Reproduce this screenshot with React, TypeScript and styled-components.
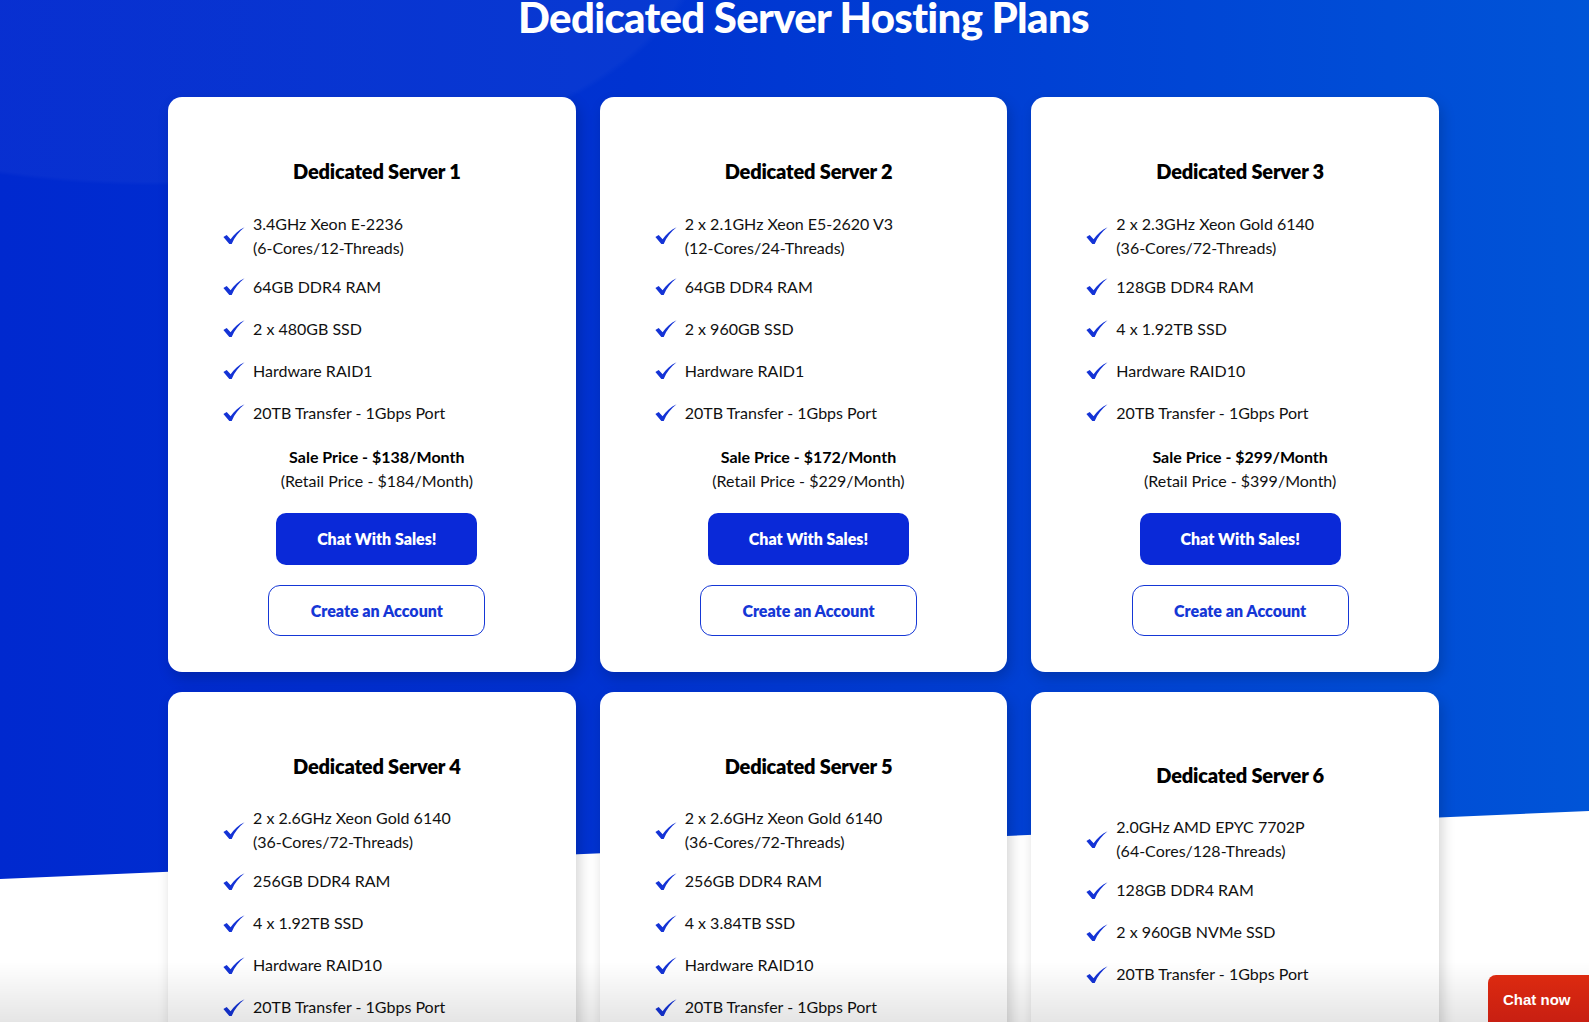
import styled, { createGlobalStyle } from 'styled-components';

interface Plan {
  name: string;
  features: string[][];
  sale?: string;
  retail?: string;
  shift?: number;
}

const plans: Plan[] = [
  {
    name: 'Dedicated Server 1',
    features: [
      ['3.4GHz Xeon E-2236', '(6-Cores/12-Threads)'],
      ['64GB DDR4 RAM'],
      ['2 x 480GB SSD'],
      ['Hardware RAID1'],
      ['20TB Transfer - 1Gbps Port'],
    ],
    sale: '$138/Month',
    retail: '$184/Month',
  },
  {
    name: 'Dedicated Server 2',
    features: [
      ['2 x 2.1GHz Xeon E5-2620 V3', '(12-Cores/24-Threads)'],
      ['64GB DDR4 RAM'],
      ['2 x 960GB SSD'],
      ['Hardware RAID1'],
      ['20TB Transfer - 1Gbps Port'],
    ],
    sale: '$172/Month',
    retail: '$229/Month',
  },
  {
    name: 'Dedicated Server 3',
    features: [
      ['2 x 2.3GHz Xeon Gold 6140', '(36-Cores/72-Threads)'],
      ['128GB DDR4 RAM'],
      ['4 x 1.92TB SSD'],
      ['Hardware RAID10'],
      ['20TB Transfer - 1Gbps Port'],
    ],
    sale: '$299/Month',
    retail: '$399/Month',
  },
  {
    name: 'Dedicated Server 4',
    features: [
      ['2 x 2.6GHz Xeon Gold 6140', '(36-Cores/72-Threads)'],
      ['256GB DDR4 RAM'],
      ['4 x 1.92TB SSD'],
      ['Hardware RAID10'],
      ['20TB Transfer - 1Gbps Port'],
    ],
  },
  {
    name: 'Dedicated Server 5',
    features: [
      ['2 x 2.6GHz Xeon Gold 6140', '(36-Cores/72-Threads)'],
      ['256GB DDR4 RAM'],
      ['4 x 3.84TB SSD'],
      ['Hardware RAID10'],
      ['20TB Transfer - 1Gbps Port'],
    ],
  },
  {
    name: 'Dedicated Server 6',
    features: [
      ['2.0GHz AMD EPYC 7702P', '(64-Cores/128-Threads)'],
      ['128GB DDR4 RAM'],
      ['2 x 960GB NVMe SSD'],
      ['20TB Transfer - 1Gbps Port'],
    ],
    shift: 9,
  },
];

const Check = () => (
  <CheckIcon viewBox="0 0 22 17" aria-hidden="true">
    <path d="M0.4 9.9 L3.7 8.1 L7.6 12.3 C11 7.4 15.6 2.9 21.6 0.2 C15.9 4.8 11.6 10.1 8.7 16.9 L6.3 16.9 Z" />
  </CheckIcon>
);

const App = () => {
  return (
    <>
      <GlobalStyle />
      <Page>
        <Backdrop />
        <Container>
          <Heading>Dedicated Server Hosting Plans</Heading>
          <Grid>
            {plans.map((p) => (
              <Card key={p.name} $shift={p.shift || 0}>
                <PlanTitle>{p.name}</PlanTitle>
                <FeatureList>
                  {p.features.map((f) => (
                    <Feature key={f[0]}>
                      <Check />
                      <span>
                        {f.map((line, i) => (
                          <Line key={i}>{line}</Line>
                        ))}
                      </span>
                    </Feature>
                  ))}
                </FeatureList>
                {p.sale && (
                  <>
                    <Price>
                      <Sale>Sale Price - {p.sale}</Sale>
                      <div>(Retail Price - {p.retail})</div>
                    </Price>
                    <ChatButton>Chat With Sales!</ChatButton>
                    <AccountButton>Create an Account</AccountButton>
                  </>
                )}
              </Card>
            ))}
          </Grid>
        </Container>
        <BottomFade />
        <ChatNow>Chat now</ChatNow>
      </Page>
    </>
  );
};

export default App;

const GlobalStyle = createGlobalStyle`
html, body {
  margin: 0;
  padding: 0;
}
body {
  font-family: Lato, "Open Sans", sans-serif;
  background: #fff;
  overflow: hidden;
}
`;

const Page = styled.div`
position: relative;
min-height: 1022px;
padding-left: 18px;
overflow: hidden;
`;

const Backdrop = styled.div`
position: absolute;
top: 0;
left: 0;
right: 0;
height: 880px;
background:
  radial-gradient(ellipse 900px 420px at 10% -8%, rgba(255,255,255,0.03) 0 60%, transparent 61%),
  linear-gradient(90deg, #0029cf 0%, #0033d1 40%, #0046d5 75%, #0054d7 100%);
clip-path: polygon(0 0, 100% 0, 100% 811px, 0 879px);
`;

const Container = styled.div`
position: relative;
z-index: 1;
width: 1271px;
margin: 0 auto;
`;

const Heading = styled.h1`
margin: -8px 0 54.6px;
text-align: center;
color: #fff;
font-size: 42px;
line-height: 50.4px;
font-weight: 900;
letter-spacing: -0.7px;
`;

const Grid = styled.div`
display: grid;
grid-template-columns: repeat(3, 1fr);
column-gap: 24px;
row-gap: 20px;
`;

const Card = styled.div<{ $shift: number }>`
background: #fff;
border-radius: 14px;
box-shadow: 3px 6px 14px rgba(0, 0, 0, 0.18);
padding: ${(p) => 62 + p.$shift}px 30px 36px 40px;
display: flex;
flex-direction: column;
align-items: center;
`;

const PlanTitle = styled.h3`
margin: 0;
font-size: 20px;
line-height: 24px;
font-weight: 800;
letter-spacing: -0.2px;
color: #000;
`;

const FeatureList = styled.ul`
list-style: none;
margin: 28.5px 0 0;
padding: 0 0 0 15px;
align-self: stretch;
display: flex;
flex-direction: column;
gap: 12px;
`;

const Feature = styled.li`
display: flex;
align-items: center;
gap: 8px;
min-height: 30px;
font-size: 16px;
line-height: 24px;
color: #111;
`;

const Line = styled.span`
display: block;
`;

const CheckIcon = styled.svg`
width: 22px;
height: 17px;
flex-shrink: 0;
fill: #1433d6;
`;

const Price = styled.div`
margin-top: 17px;
text-align: center;
font-size: 16px;
line-height: 24px;
color: #111;
`;

const Sale = styled.div`
font-weight: 700;
color: #000;
`;

const ChatButton = styled.button`
margin-top: 20px;
width: 201px;
height: 52px;
border: none;
border-radius: 10px;
background: #0a29d8;
color: #fff;
font-family: Lato, sans-serif;
font-size: 16px;
font-weight: 800;
`;

const AccountButton = styled.button`
margin-top: 20px;
width: 217px;
height: 51px;
border: 1px solid #1537d6;
border-radius: 12px;
background: #fff;
color: #1537d6;
font-family: Lato, sans-serif;
font-size: 16px;
font-weight: 800;
`;

const BottomFade = styled.div`
position: fixed;
left: 0;
right: 0;
bottom: 0;
height: 60px;
background: linear-gradient(rgba(0, 0, 0, 0), rgba(0, 0, 0, 0.1));
pointer-events: none;
z-index: 5;
`;

const ChatNow = styled.div`
position: fixed;
right: 0;
bottom: 0;
width: 101px;
height: 47px;
box-sizing: border-box;
padding: 16px 0 0 15px;
background: linear-gradient(#dc2a10, #c81f12);
color: #fff;
font-family: "Liberation Sans", Arial, sans-serif;
font-size: 15px;
line-height: 18px;
font-weight: 700;
border-radius: 8px 0 0 0;
z-index: 6;
`;
